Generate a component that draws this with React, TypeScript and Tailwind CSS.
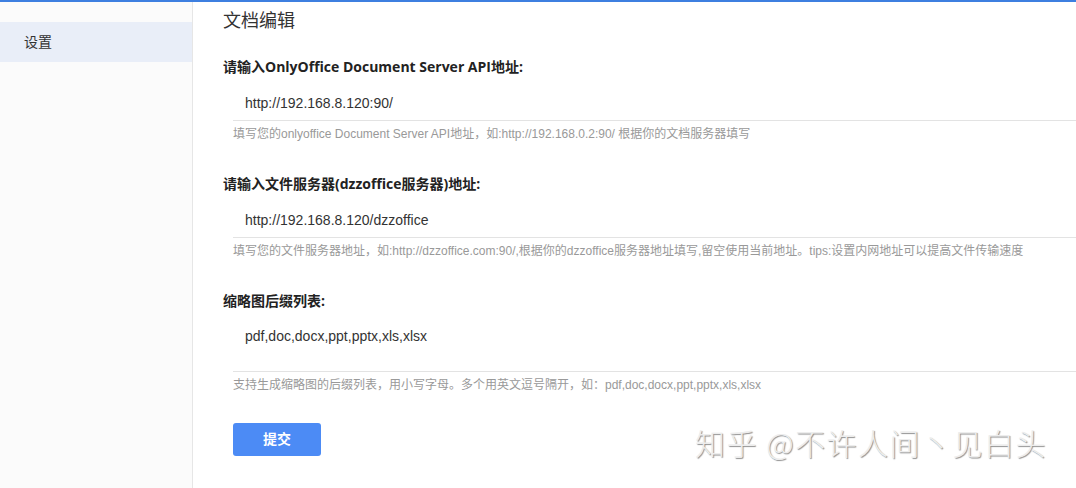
import React, { useState } from "react";

const FONT = { fontFamily: '"Liberation Sans", "Noto Sans CJK SC", sans-serif' };
const LABEL_FONT = { fontFamily: '"Open Sans", "Noto Sans CJK SC", sans-serif' };

type Field = {
  label: string;
  value: string;
  hint: string;
  multiline?: boolean;
};

const FIELDS: Field[] = [
  {
    label: "请输入OnlyOffice Document Server API地址:",
    value: "http://192.168.8.120:90/",
    hint: "填写您的onlyoffice Document Server API地址，如:http://192.168.0.2:90/ 根据你的文档服务器填写",
  },
  {
    label: "请输入文件服务器(dzzoffice服务器)地址:",
    value: "http://192.168.8.120/dzzoffice",
    hint: "填写您的文件服务器地址，如:http://dzzoffice.com:90/,根据你的dzzoffice服务器地址填写,留空使用当前地址。tips:设置内网地址可以提高文件传输速度",
  },
  {
    label: "缩略图后缀列表:",
    value: "pdf,doc,docx,ppt,pptx,xls,xlsx",
    hint: "支持生成缩略图的后缀列表，用小写字母。多个用英文逗号隔开，如：pdf,doc,docx,ppt,pptx,xls,xlsx",
    multiline: true,
  },
];

function FormField({ field, first }: { field: Field; first: boolean }) {
  const [value, setValue] = useState(field.value);

  return (
    <div className={first ? "mt-6" : "mt-[32px]"}>
      <label className="block text-[14px] leading-5 font-bold text-[#222]" style={LABEL_FONT}>
        {field.label}
      </label>
      <div className="mt-[9px] ml-[10px]">
        {field.multiline ? (
          <textarea
            value={value}
            onChange={(e) => setValue(e.target.value)}
            className="block w-full h-[52px] px-3 pt-[6px] text-[14px] leading-5 text-[#333] border-b border-[#e3e3e3] outline-none resize-none"
            style={FONT}
          />
        ) : (
          <input
            value={value}
            onChange={(e) => setValue(e.target.value)}
            className="block w-full h-[35px] px-3 text-[14px] text-[#333] border-b border-[#e3e3e3] outline-none"
            style={FONT}
          />
        )}
        <p className="mt-[5px] text-[12px] leading-4 text-[#999]">{field.hint}</p>
      </div>
    </div>
  );
}

export default function App() {
  return (
    <div className="relative h-[488px] w-full overflow-hidden bg-white flex flex-col" style={FONT}>
      {/* top accent bar */}
      <div className="h-[2px] bg-[#3d7fe0] flex-shrink-0" />

      <div className="flex flex-1 min-h-0">
        {/* Sidebar */}
        <aside className="w-[193px] flex-shrink-0 bg-[#fbfbfb] border-r border-[#e6e6e6] pt-5">
          <div className="h-10 flex items-center pl-6 bg-[#e9eef8] text-[14px] text-[#333]">设置</div>
        </aside>

        {/* Main */}
        <main className="flex-1 min-w-0 pl-[30px] pt-[7px]">
          <h2 className="text-[18px] leading-6 text-[#333]">文档编辑</h2>

          {FIELDS.map((f, i) => (
            <FormField key={f.label} field={f} first={i === 0} />
          ))}

          <button className="mt-[30px] ml-[10px] w-[88px] h-[33px] rounded-[3px] bg-[#4c8bf5] text-white text-[14px] font-bold">
            提交
          </button>
        </main>
      </div>

      {/* watermark */}
      <div
        className="absolute left-[695px] top-[424px] text-[30px] leading-9 tracking-[1.5px] text-[#ededed] whitespace-nowrap pointer-events-none"
        style={{ textShadow: "1px 1px 1px #8f8f8f", fontFamily: '"Noto Sans CJK SC", sans-serif', fontWeight: 300 }}
      >
        知乎 @不许人间丶见白头
      </div>
    </div>
  );
}
